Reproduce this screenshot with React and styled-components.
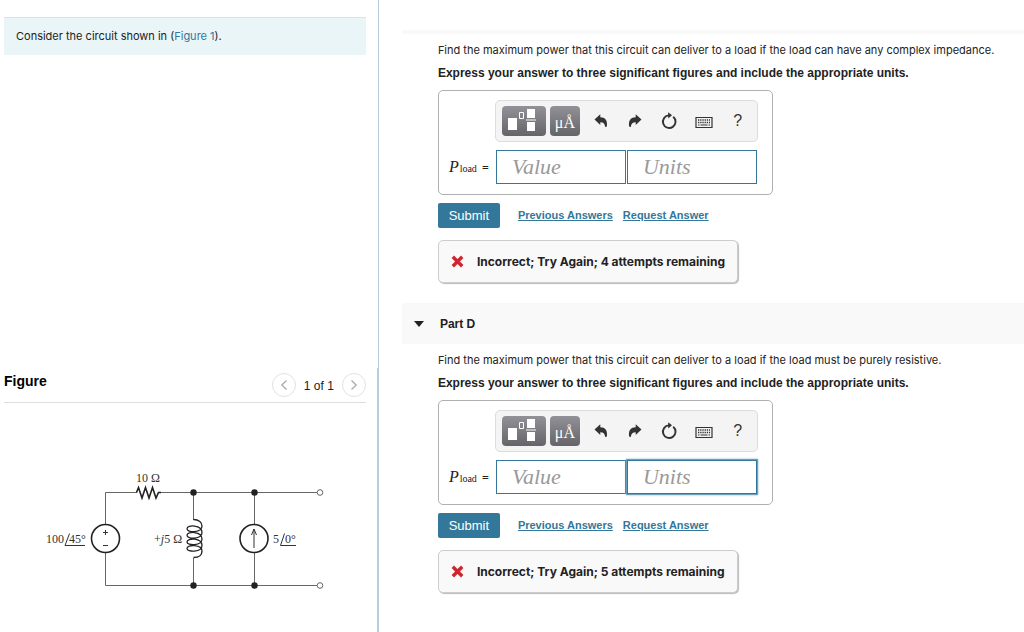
import React from "react";
import styled, { createGlobalStyle, css } from "styled-components";

const teal = "#33789a";
const sans = `"Liberation Sans", Arial, Helvetica, sans-serif`;
const copy = `Inter, "Liberation Sans", sans-serif`;
const serif = `"Liberation Serif", "Times New Roman", serif`;

const GlobalStyle = createGlobalStyle`
  *, *::before, *::after { box-sizing: border-box; }
  body {
    margin: 0;
    background: #fff;
    color: #222;
    font-family: ${sans};
    font-size: 12px;
    line-height: 16px;
  }
  p, h2, h3 { margin: 0; }
  button, input { font-family: inherit; margin: 0; }
`;

const Page = styled.div`
  display: grid;
  grid-template-columns: 37% minmax(0, 1fr);
  min-height: 100vh;
`;

const Sidebar = styled.aside`
  display: flex;
  flex-direction: column;
`;

const Context = styled.section`
  flex: 1;
  padding: 17px 12px 0 4px;
  border-right: 1px solid #bccbdf;
`;

const Notice = styled.p`
  padding: 10px 12px 11px;
  border-top: 1px solid #d9e2e4;
  background: #e9f5f7;
  font-family: ${copy};
  font-size: 11px;
`;

const TextLink = styled.a`
  color: ${teal};
  text-decoration: none;
`;

const FigurePanel = styled.section`
  height: 265px;
  padding: 0 11px 0 4px;
  border-right: 2px solid #bccbdf;
`;

const FigureHeader = styled.header`
  display: flex;
  align-items: center;
  justify-content: space-between;
  height: 35px;
  border-bottom: 1px solid #ddd;
`;

const FigureTitle = styled.h2`
  padding-bottom: 8px;
  color: #000;
  font-size: 14px;
`;

const Pager = styled.nav`
  display: flex;
  align-items: center;
  gap: 8px;
  span { padding-top: 2px; }
`;

const PagerButton = styled.button`
  display: flex;
  align-items: center;
  justify-content: center;
  width: 24px;
  height: 24px;
  padding: 0;
  border: 1px solid #e2e2e2;
  border-radius: 50%;
  background: #fff;
`;

const Circuit = styled.svg`
  display: block;
  width: 290px;
  height: 130px;
  margin: 62px 0 0 36px;
  font-family: ${serif};
  font-size: 12px;
  fill: #333;
`;

const Main = styled.main`
  padding: 30px 0 20px 23px;
`;

const PartHeader = styled.button`
  display: flex;
  align-items: center;
  gap: 16px;
  width: 100%;
  height: 41px;
  padding: 0 12px;
  border: 0;
  background: #f9f9f9;
  color: #222;
  font-size: 12px;
  font-weight: bold;
  text-align: left;
`;

const Strip = styled.div`
  height: 4px;
  background: #f9f9f9;
`;

const PartBody = styled.section`
  display: flex;
  flex-direction: column;
  align-items: flex-start;
  padding: 8px 8px 20px 36px;
`;

const Question = styled.p`
  margin-bottom: 7px;
  font-family: ${copy};
  font-size: 11px;
`;

const Instructions = styled.p`
  margin-bottom: 9px;
  font-weight: bold;
`;

const AnswerBox = styled.form`
  display: grid;
  grid-template-columns: 46px 263px;
  row-gap: 8px;
  width: 335px;
  padding: 9px 14px 10px 10px;
  border: 1px solid #b0b0b0;
  border-radius: 5px;
`;

const Toolbar = styled.div`
  grid-column: 2;
  display: flex;
  align-items: center;
  height: 42px;
  padding: 0 2px 0 6px;
  border: 1px solid #dcdcdc;
  border-radius: 5px;
  background: #f4f4f4;
`;

const PaletteButton = styled.button`
  display: flex;
  align-items: center;
  justify-content: center;
  width: ${(p) => (p.$wide ? 44 : 30)}px;
  height: 30px;
  margin-right: 4px;
  padding: ${(p) => (p.$wide ? 0 : "4px 0 0")};
  border: 0;
  border-radius: 4px;
  background: linear-gradient(#919197, #656569);
  color: #fff;
  font-family: ${serif};
  font-size: 16px;
`;

const ToolButton = styled.button`
  display: flex;
  flex: 1;
  align-items: center;
  justify-content: center;
  height: 30px;
  padding: 0;
  border: 0;
  background: none;
  color: #333;
  font-size: 16px;
`;

const AnswerLabel = styled.label`
  display: flex;
  align-items: baseline;
  align-self: center;
  font-family: ${serif};
  font-size: 12px;
  font-weight: bold;
  i { font-size: 16px; font-weight: normal; }
`;

const Subscript = styled.sub`
  margin: 0 5px 0 1px;
  font-size: 10px;
  font-weight: normal;
  vertical-align: baseline;
  padding-top: 4px;
`;

const Fields = styled.div`
  display: grid;
  grid-template-columns: 1fr 1fr;
  gap: 1px;
  padding: 0 1px;
`;

const Field = styled.input`
  width: 100%;
  height: 34px;
  padding: 0 15px;
  border: 1px solid ${teal};
  border-radius: 0;
  background: #fff;
  color: #333;
  font-family: ${serif};
  font-size: 22px;
  outline: none;
  &::placeholder { color: #999; font-style: italic; opacity: 1; }
  ${(p) => p.$active && css`box-shadow: 0 0 0 1px #6ba0ba, 0 0 2px 1px #8ab5ca;`}
`;

const Actions = styled.div`
  display: flex;
  align-items: center;
  gap: 10px;
  margin: 8px 0 12px;
`;

const Submit = styled.button`
  width: 62px;
  height: 25px;
  margin-right: 8px;
  padding: 0;
  border: 0;
  border-radius: 2px;
  background: ${teal};
  color: #fff;
  font-size: 13px;
`;

const ActionLink = styled.a`
  padding-bottom: 2px;
  color: ${teal};
  font-size: 11px;
  font-weight: bold;
  text-decoration: underline;
`;

const Feedback = styled.div`
  display: flex;
  align-items: center;
  gap: 13px;
  height: 43px;
  padding: 0 12px;
  border: 1px solid #ccc;
  border-radius: 5px;
  background: #f9f9f9;
  box-shadow: 1px 1px 1px #bbb;
  font-family: ${copy};
  font-weight: bold;
`;

function Chevron({ right }) {
  return (
    <svg width="8" height="12" viewBox="0 0 8 12" fill="none" stroke="#aaa" strokeWidth="1.3">
      <path d={right ? "M1.5 1.5 6.2 6 1.5 10.5" : "M6.5 1.5 1.8 6 6.5 10.5"} />
    </svg>
  );
}

function TemplatesIcon() {
  return (
    <svg width="32" height="26" viewBox="0 0 32 26">
      <path fill="#fff" d="M0 10h9v12H0zM19 1h8v9h-8zM19 14h8v9h-8zM18 11.5h10v1H18z" />
      <path fill="none" stroke="#fff" d="M11.5 4.5h4v6h-4z" />
    </svg>
  );
}

function TurnArrow({ redo }) {
  return (
    <svg width="14" height="14" viewBox="0 0 14 14" fill="#333">
      <path
        transform={redo ? "matrix(-1 0 0 1 14 0)" : undefined}
        d="M0.5 5.4 6.3 0.3v2.9c4.8.1 7.4 2.7 6.6 9.4l-1.8.5C11 9.8 9.6 8.3 6.3 8.2v2.7z"
      />
    </svg>
  );
}

function ResetIcon() {
  return (
    <svg width="16" height="18" viewBox="0 0 16 18">
      <path d="M12.2 4.8A6.3 6.3 0 1 1 8 3.4" fill="none" stroke="#333" strokeWidth="1.9" />
      <path d="M7.2.3 11 3.3 7.2 6.4z" fill="#333" />
    </svg>
  );
}

function KeyboardIcon() {
  return (
    <svg width="18" height="15" viewBox="0 0 18 15">
      <path d="M1 3.5h16v10H1z" fill="none" stroke="#333" strokeWidth="1.2" />
      <path d="M3 6h12M3 8.5h12" stroke="#333" strokeWidth="1.3" strokeDasharray="1.3 .9" />
      <path d="M3 11h1.5M5.5 11h7M13.5 11H15" stroke="#333" strokeWidth="1.2" />
    </svg>
  );
}

function CrossIcon() {
  return (
    <svg width="13" height="13" viewBox="0 0 13 13">
      <path d="M3 3 10 10M10 3 3 10" stroke="#cc272e" strokeWidth="3.4" strokeLinecap="square" />
    </svg>
  );
}

function CircuitDiagram() {
  return (
    <Circuit viewBox="40 465 290 130" role="img" aria-label="Circuit diagram">
      <g fill="none" stroke="#666">
        <path d="M105.5 524V492.5H137M160 492.5H317M105.5 553V585.5H317M193.5 492.5V520M193.5 558V585.5M254.5 492.5V524M254.5 553V585.5" />
      </g>
      <g fill="none" stroke="#222" strokeWidth="1.6">
        <path d="M136.5 492.5 138.5 487.5 142 498 145.5 487.5 149 498 152.5 487.5 156 498 158.5 492.5H161" />
        <circle cx="105.5" cy="538.5" r="14" fill="#fff" />
        <circle cx="254" cy="538.5" r="14" fill="#fff" />
        <path
          strokeWidth="1.3"
          d="M193.5 519.5C199 519.5 202 522.5 202 526C202 533 187 533 187 528.7C187 524.5 202 524.5 202 532.5C202 539.5 187 539.5 187 535.3C187 531 202 531 202 539C202 546 187 546 187 541.9C187 537.7 202 537.7 202 545.5C202 552.5 187 552.5 187 548.5C187 544.3 202 544.3 202 551C202 555 199 557.5 193.5 557.5"
        />
      </g>
      <g fill="none" stroke="#333">
        <path d="M254 548V529M251.5 535 254 529 256.5 535M103 532.5H108M105.5 530V535M103 545.5H108" />
        <path d="M65 545.5H85M65 545.5 69.5 533.5M280.5 545.5H296M280.5 545.5 284.5 533.5" />
      </g>
      <g fill="#222">
        <circle cx="193.5" cy="492.5" r="3.2" />
        <circle cx="254.5" cy="492.5" r="3.2" />
        <circle cx="193.5" cy="585.5" r="3.2" />
        <circle cx="254.5" cy="585.5" r="3.2" />
      </g>
      <g fill="#fff" stroke="#666">
        <circle cx="320" cy="492.5" r="2.8" />
        <circle cx="320" cy="585.5" r="2.8" />
      </g>
      <text x="136" y="482">10 Ω</text>
      <text x="46" y="543">100</text>
      <text x="69" y="543">45°</text>
      <text x="154" y="543">+<tspan fontStyle="italic">j</tspan>5 Ω</text>
      <text x="273" y="543">5</text>
      <text x="285" y="543">0°</text>
    </Circuit>
  );
}

function Part({ id, question, attempts, unitsActive }) {
  return (
    <PartBody>
      <Question>{question}</Question>
      <Instructions>
        Express your answer to three significant figures and include the appropriate units.
      </Instructions>
      <AnswerBox id={`${id}-form`} onSubmit={(e) => e.preventDefault()}>
        <Toolbar role="toolbar" aria-label="Answer tools">
          <PaletteButton type="button" $wide aria-label="Templates"><TemplatesIcon /></PaletteButton>
          <PaletteButton type="button">μÅ</PaletteButton>
          <ToolButton type="button" aria-label="Undo"><TurnArrow /></ToolButton>
          <ToolButton type="button" aria-label="Redo"><TurnArrow redo /></ToolButton>
          <ToolButton type="button" aria-label="Reset"><ResetIcon /></ToolButton>
          <ToolButton type="button" aria-label="Keyboard shortcuts"><KeyboardIcon /></ToolButton>
          <ToolButton type="button">?</ToolButton>
        </Toolbar>
        <AnswerLabel htmlFor={`${id}-value`}><i>P</i><Subscript>load</Subscript>=</AnswerLabel>
        <Fields>
          <Field id={`${id}-value`} placeholder="Value" />
          <Field aria-label="Units" placeholder="Units" $active={unitsActive} />
        </Fields>
      </AnswerBox>
      <Actions>
        <Submit type="submit" form={`${id}-form`}>Submit</Submit>
        <ActionLink href="#previous">Previous Answers</ActionLink>
        <ActionLink href="#request">Request Answer</ActionLink>
      </Actions>
      <Feedback role="status">
        <CrossIcon />
        <span>Incorrect; Try Again; {attempts} attempts remaining</span>
      </Feedback>
    </PartBody>
  );
}

export default function App() {
  return (
    <>
      <GlobalStyle />
      <Page>
        <Sidebar>
          <Context>
            <Notice>
              Consider the circuit shown in (<TextLink href="#figure">Figure 1</TextLink>).
            </Notice>
          </Context>
          <FigurePanel id="figure">
            <FigureHeader>
              <FigureTitle>Figure</FigureTitle>
              <Pager aria-label="Figures">
                <PagerButton type="button" aria-label="Previous figure"><Chevron /></PagerButton>
                <span>1 of 1</span>
                <PagerButton type="button" aria-label="Next figure"><Chevron right /></PagerButton>
              </Pager>
            </FigureHeader>
            <CircuitDiagram />
          </FigurePanel>
        </Sidebar>
        <Main>
          <Strip />
          <Part
            id="part-c"
            question="Find the maximum power that this circuit can deliver to a load if the load can have any complex impedance."
            attempts={4}
          />
          <PartHeader type="button" aria-expanded="true">
            <svg width="10" height="6" viewBox="0 0 10 6"><path d="M0 0h10L5 6z" fill="#222" /></svg>
            Part D
          </PartHeader>
          <Part
            id="part-d"
            question="Find the maximum power that this circuit can deliver to a load if the load must be purely resistive."
            attempts={5}
            unitsActive
          />
        </Main>
      </Page>
    </>
  );
}
